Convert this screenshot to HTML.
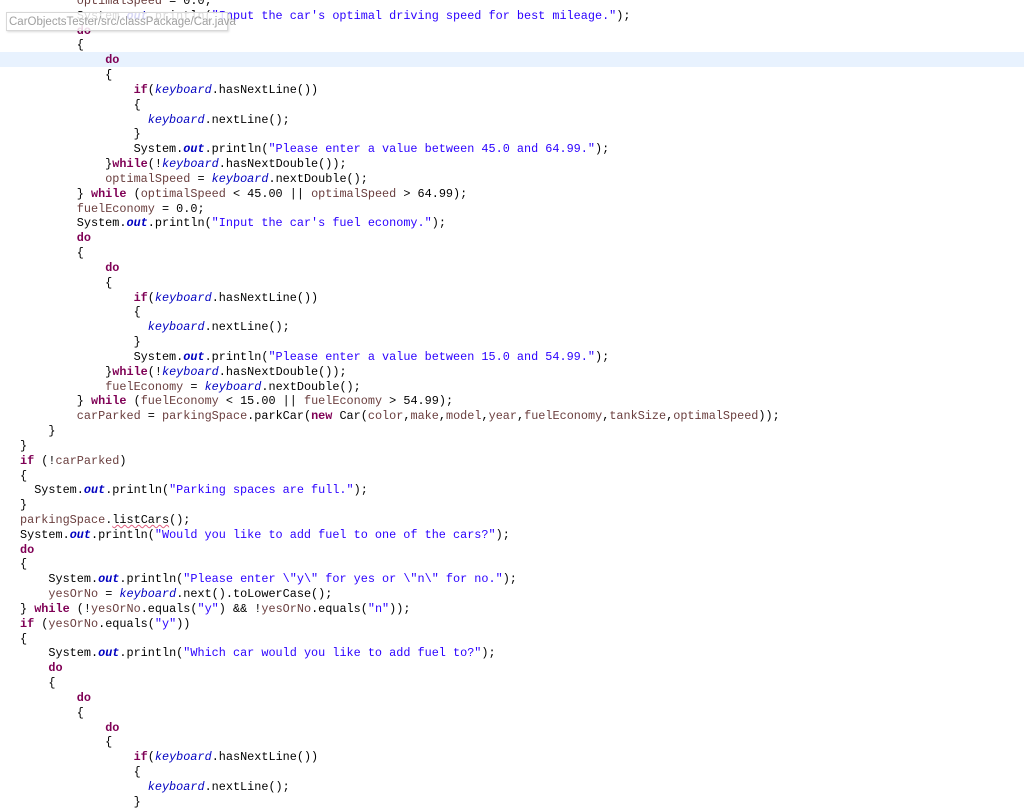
<!DOCTYPE html>
<html><head><meta charset="utf-8"><style>
body{margin:0;width:1024px;height:811px;background:#fff;overflow:hidden;position:relative}
.hl{position:absolute;left:0;top:52px;width:1024px;height:14.8px;background:#e8f2fe}
pre{position:absolute;left:20px;top:-6px;margin:0;font-family:"Liberation Mono",monospace;font-size:11.83px;line-height:14.83px;color:#000}
.k{color:#7f0055;font-weight:bold}
.s{color:#2a00ff}
.f{color:#0000c0;font-style:italic;font-weight:bold}
.v{color:#0000c0;font-style:italic}
.l{color:#6a3e3e}
.u{text-decoration:underline wavy #e06080;text-decoration-thickness:1px}
.tip{position:absolute;left:6px;top:12px;width:222px;height:19px;background:rgba(255,255,255,0.85);border:1px solid #d8d8d8;box-shadow:1px 1px 2px rgba(0,0,0,0.15);font-family:"Liberation Sans",sans-serif;font-size:11.5px;color:#a0a0a0;line-height:19px;padding-left:2px;box-sizing:border-box}
</style></head><body>
<div class="hl"></div>
<pre>        <span class="l">optimalSpeed</span> = 0.0;
        System.<span class="f">out</span>.println(<span class="s">"Input the car's optimal driving speed for best mileage."</span>);
        <span class="k">do</span>
        {
            <span class="k">do</span>
            {
                <span class="k">if</span>(<span class="v">keyboard</span>.hasNextLine())
                {
                  <span class="v">keyboard</span>.nextLine();
                }
                System.<span class="f">out</span>.println(<span class="s">"Please enter a value between 45.0 and 64.99."</span>);
            }<span class="k">while</span>(!<span class="v">keyboard</span>.hasNextDouble());
            <span class="l">optimalSpeed</span> = <span class="v">keyboard</span>.nextDouble();
        } <span class="k">while</span> (<span class="l">optimalSpeed</span> &lt; 45.00 || <span class="l">optimalSpeed</span> &gt; 64.99);
        <span class="l">fuelEconomy</span> = 0.0;
        System.<span class="f">out</span>.println(<span class="s">"Input the car's fuel economy."</span>);
        <span class="k">do</span>
        {
            <span class="k">do</span>
            {
                <span class="k">if</span>(<span class="v">keyboard</span>.hasNextLine())
                {
                  <span class="v">keyboard</span>.nextLine();
                }
                System.<span class="f">out</span>.println(<span class="s">"Please enter a value between 15.0 and 54.99."</span>);
            }<span class="k">while</span>(!<span class="v">keyboard</span>.hasNextDouble());
            <span class="l">fuelEconomy</span> = <span class="v">keyboard</span>.nextDouble();
        } <span class="k">while</span> (<span class="l">fuelEconomy</span> &lt; 15.00 || <span class="l">fuelEconomy</span> &gt; 54.99);
        <span class="l">carParked</span> = <span class="l">parkingSpace</span>.parkCar(<span class="k">new</span> Car(<span class="l">color</span>,<span class="l">make</span>,<span class="l">model</span>,<span class="l">year</span>,<span class="l">fuelEconomy</span>,<span class="l">tankSize</span>,<span class="l">optimalSpeed</span>));
    }
}
<span class="k">if</span> (!<span class="l">carParked</span>)
{
  System.<span class="f">out</span>.println(<span class="s">"Parking spaces are full."</span>);
}
<span class="l">parkingSpace</span>.<span class="u">listCars</span>();
System.<span class="f">out</span>.println(<span class="s">"Would you like to add fuel to one of the cars?"</span>);
<span class="k">do</span>
{
    System.<span class="f">out</span>.println(<span class="s">"Please enter \"y\" for yes or \"n\" for no."</span>);
    <span class="l">yesOrNo</span> = <span class="v">keyboard</span>.next().toLowerCase();
} <span class="k">while</span> (!<span class="l">yesOrNo</span>.equals(<span class="s">"y"</span>) &amp;&amp; !<span class="l">yesOrNo</span>.equals(<span class="s">"n"</span>));
<span class="k">if</span> (<span class="l">yesOrNo</span>.equals(<span class="s">"y"</span>))
{
    System.<span class="f">out</span>.println(<span class="s">"Which car would you like to add fuel to?"</span>);
    <span class="k">do</span>
    {
        <span class="k">do</span>
        {
            <span class="k">do</span>
            {
                <span class="k">if</span>(<span class="v">keyboard</span>.hasNextLine())
                {
                  <span class="v">keyboard</span>.nextLine();
                }
</pre>
<div class="tip">CarObjectsTester/src/classPackage/Car.java</div>
</body></html>
